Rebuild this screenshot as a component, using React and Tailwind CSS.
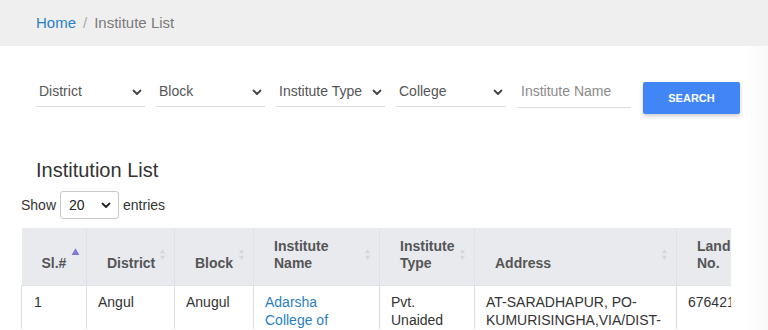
import React from 'react';

const font = { fontFamily: '"Liberation Sans", Arial, sans-serif' };

function Chevron({ className = '' }) {
  return (
    <svg viewBox="0 0 12 12" className={className} fill="none" stroke="currentColor" strokeWidth="1.8" strokeLinecap="round" strokeLinejoin="round">
      <path d="M2.5 4.5 6 8l3.5-3.5" />
    </svg>
  );
}

function SortIcon({ active }) {
  if (active) {
    return (
      <svg viewBox="0 0 8 8" className="w-[9px] h-[9px] absolute right-[6px] top-[19px]">
        <path d="M4 1 7.5 7h-7z" fill="#7b7bd6" />
      </svg>
    );
  }
  return (
    <svg viewBox="0 0 8 14" className="w-[7px] h-[13px] absolute right-[8px] top-[20px]">
      <path d="M4 1 7 5.5H1z" fill="#d3d6db" />
      <path d="M4 13 7 8.5H1z" fill="#d3d6db" />
    </svg>
  );
}

function FilterSelect({ label, width }) {
  return (
    <div className={`flex items-center justify-between border-b border-[#dcdcdc] h-[30px] pl-[3px] pr-[2px] ${width}`}>
      <span className="text-[14px] text-[#555]">{label}</span>
      <Chevron className="w-[12px] h-[12px] text-[#444]" />
    </div>
  );
}

const cols = [
  { key: 'sl', label: ['Sl.#'], w: 'w-[65px]', active: true },
  { key: 'district', label: ['District'], w: 'w-[88px]' },
  { key: 'block', label: ['Block'], w: 'w-[79px]' },
  { key: 'name', label: ['Institute', 'Name'], w: 'w-[126px]' },
  { key: 'type', label: ['Institute', 'Type'], w: 'w-[95px]' },
  { key: 'address', label: ['Address'], w: 'w-[202px]' },
  { key: 'land', label: ['Land', 'No.'], w: 'w-[110px]' },
];

export default function App() {
  return (
    <div className="w-[768px] h-[330px] overflow-hidden bg-white flex flex-col" style={font}>
      {/* breadcrumb */}
      <div className="h-[46px] shrink-0 bg-[#efefef] flex items-center pl-[36px] text-[15px]">
        <span className="text-[#2a7fc3]">Home</span>
        <span className="text-[#aaa] mx-[7px]">/</span>
        <span className="text-[#7a7a7a]">Institute List</span>
      </div>

      <div className="flex flex-1">
        <div className="w-[743px] shrink-0">
          {/* filters */}
          <div className="flex items-start pl-[36px] mt-[31px] gap-[11px]">
            <FilterSelect label="District" width="w-[109px]" />
            <FilterSelect label="Block" width="w-[109px]" />
            <FilterSelect label="Institute Type" width="w-[109px]" />
            <FilterSelect label="College" width="w-[110px]" />
            <div className="w-[114px] h-[31px] border-b border-[#dcdcdc] pl-[4px] text-[14px] text-[#8a8a8a] leading-[28px]">Institute Name</div>
            <button className="ml-[1px] mt-[5px] w-[97px] h-[32px] bg-[#4285f4] rounded-[2px] text-white text-[11px] font-bold shadow-[0_2px_4px_rgba(0,0,0,0.2)]">
              SEARCH
            </button>
          </div>

          {/* title */}
          <div className="pl-[36px] mt-[44px] text-[20px] text-[#333] leading-[24px]">Institution List</div>

          <div className="pl-[21px] mt-[9px] flex items-center text-[14px] text-[#333]">
            <span>Show</span>
            <div className="mx-[4px] w-[59px] h-[28px] border border-[#c8c8c8] rounded-[3px] flex items-center justify-between pl-[8px] pr-[6px]">
              <span className="text-[14px] text-[#222]">20</span>
              <Chevron className="w-[12px] h-[12px] text-[#222]" />
            </div>
            <span>entries</span>
          </div>

          {/* table */}
          <div className="ml-[21px] mt-[9px] w-[710px] overflow-hidden">
            <table className="border-collapse text-[14px] table-fixed w-[765px]">
              <thead>
                <tr className="bg-[#e8eaee] h-[57px]">
                  {cols.map((c) => (
                    <th key={c.key} className={`${c.w} relative align-bottom text-left font-bold text-[#555] pl-[20px] pr-[14px] pb-[13px] leading-[17px] border-r border-[#dfe2e6] border-b border-b-[#dee2e6]`}>
                      {c.label.map((l, i) => (
                        <div key={i}>{l}</div>
                      ))}
                      <SortIcon active={c.active} />
                    </th>
                  ))}
                </tr>
              </thead>
              <tbody>
                <tr className="text-[#333] leading-[18px] align-top">
                  <td className="pl-[12px] pt-[7px] border-l border-r border-[#ddd]">1</td>
                  <td className="pl-[11px] pt-[7px] border-r border-[#ddd]">Angul</td>
                  <td className="pl-[11px] pt-[7px] border-r border-[#ddd]">Anugul</td>
                  <td className="pl-[11px] pt-[7px] border-r border-[#ddd] text-[#2a7fc3]">Adarsha<br />College of</td>
                  <td className="pl-[11px] pt-[7px] border-r border-[#ddd]">Pvt.<br />Unaided</td>
                  <td className="pl-[11px] pt-[7px] border-r border-[#ddd]">AT-SARADHAPUR, PO-<br />KUMURISINGHA,VIA/DIST-</td>
                  <td className="pl-[11px] pt-[7px] border-r border-[#ddd]">676421234</td>
                </tr>
              </tbody>
            </table>
          </div>
        </div>
        <div className="flex-1 bg-gradient-to-r from-white to-[#f9f9f9]" />
      </div>
    </div>
  );
}
